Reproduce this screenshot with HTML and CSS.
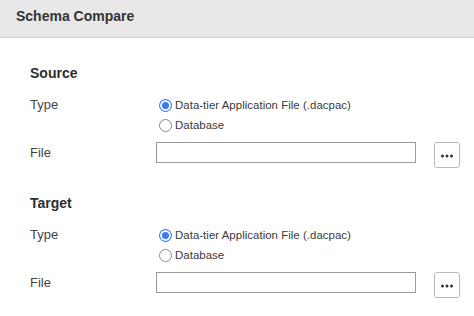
FILE: index.html
```html
<!DOCTYPE html>
<html lang="en">
<head>
    <meta charset="UTF-8">
    <meta name="viewport" content="width=device-width, initial-scale=1.0">
    <title>Schema Compare</title>
    <link rel="stylesheet" href="styles.css">
</head>
<body>
    <div class="title_bar">Schema Compare</div>
    <div class="content">
        <!-- 원본 -->
        <div class="section">
            <div class="sec_title">Source</div>
            <div class="row">
                <div class="label">Type</div>
                <div class="radios">
                    <label class="opt"><input type="radio" name="src" checked> Data-tier Application File (.dacpac)</label>
                    <label class="opt"><input type="radio" name="src"> Database</label>
                </div>
            </div>
            <div class="row row_file">
                <div class="label">File</div>
                <input type="text" class="file_box">
                <button class="btn_more"><svg width="14" height="4" viewBox="0 0 14 4"><circle cx="2.5" cy="2" r="1.5"/><circle cx="7" cy="2" r="1.5"/><circle cx="11.5" cy="2" r="1.5"/></svg></button>
            </div>
        </div>
        <!-- 대상 -->
        <div class="section">
            <div class="sec_title">Target</div>
            <div class="row">
                <div class="label">Type</div>
                <div class="radios">
                    <label class="opt"><input type="radio" name="tgt" checked> Data-tier Application File (.dacpac)</label>
                    <label class="opt"><input type="radio" name="tgt"> Database</label>
                </div>
            </div>
            <div class="row row_file">
                <div class="label">File</div>
                <input type="text" class="file_box">
                <button class="btn_more"><svg width="14" height="4" viewBox="0 0 14 4"><circle cx="2.5" cy="2" r="1.5"/><circle cx="7" cy="2" r="1.5"/><circle cx="11.5" cy="2" r="1.5"/></svg></button>
            </div>
        </div>
    </div>
</body>
</html>
```

FILE: styles.css
```css
/* schema compare 대화상자 */
body {
    margin: 0;
    background: #fff;
    font-family: "Liberation Sans", Arial, sans-serif;
    color: #444;
}
.title_bar {
    height: 37px;
    line-height: 33px;
    padding-left: 16px;
    background: #e8e8e8;
    border-bottom: 1px solid #d4d4d4;
    font-size: 14px;
    font-weight: bold;
    color: #333;
}
.content {
    padding: 25px 0 0 30px;
    display: flex;
    flex-direction: column;
    gap: 25px;
}
.sec_title {
    height: 20px;
    line-height: 20px;
    font-size: 14px;
    font-weight: bold;
    color: #2e2e2e;
    margin-bottom: 12px;
}
.row {
    display: flex;
    align-items: flex-start;
}
.label {
    width: 126px;
    font-size: 13px;
    line-height: 20px;
}
.radios {
    display: flex;
    flex-direction: column;
}
.opt {
    display: flex;
    align-items: center;
    gap: 3px;
    height: 20px;
    padding-left: 3px;
    font-size: 11.4px;
    letter-spacing: 0.05px;
    color: #3a3a3a;
}
.opt input {
    appearance: none;
    margin: 0;
    width: 13px;
    height: 13px;
    border: 1px solid #8a8a8a;
    border-radius: 50%;
    background: #fff;
}
.opt input:checked {
    border-color: #3a7bf0;
    background: #3a7bf0;
    box-shadow: inset 0 0 0 2px #fff;
}
.row_file {
    margin-top: 7px;
}
.row_file .label {
    line-height: 21px;
}
.file_box {
    box-sizing: border-box;
    width: 260px;
    height: 21px;
    margin: 0;
    border: 1px solid #9a9a9a;
    border-radius: 0;
    background: #fff;
}
.btn_more {
    box-sizing: border-box;
    width: 26px;
    height: 26px;
    margin: 0 0 0 18px;
    padding: 0;
    border: 1px solid #b8b8b8;
    border-radius: 3px;
    background: #fff;
    display: flex;
    align-items: center;
    justify-content: center;
}
.btn_more svg {
    fill: #333;
    margin-top: 1px;
}
```
